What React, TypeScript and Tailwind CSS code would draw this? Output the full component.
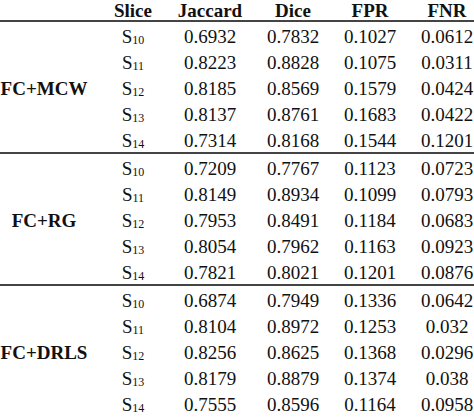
const groups = [
  {
    name: "FC+MCW",
    rows: [
      ["10", "0.6932", "0.7832", "0.1027", "0.0612"],
      ["11", "0.8223", "0.8828", "0.1075", "0.0311"],
      ["12", "0.8185", "0.8569", "0.1579", "0.0424"],
      ["13", "0.8137", "0.8761", "0.1683", "0.0422"],
      ["14", "0.7314", "0.8168", "0.1544", "0.1201"],
    ],
  },
  {
    name: "FC+RG",
    rows: [
      ["10", "0.7209", "0.7767", "0.1123", "0.0723"],
      ["11", "0.8149", "0.8934", "0.1099", "0.0793"],
      ["12", "0.7953", "0.8491", "0.1184", "0.0683"],
      ["13", "0.8054", "0.7962", "0.1163", "0.0923"],
      ["14", "0.7821", "0.8021", "0.1201", "0.0876"],
    ],
  },
  {
    name: "FC+DRLS",
    rows: [
      ["10", "0.6874", "0.7949", "0.1336", "0.0642"],
      ["11", "0.8104", "0.8972", "0.1253", "0.032"],
      ["12", "0.8256", "0.8625", "0.1368", "0.0296"],
      ["13", "0.8179", "0.8879", "0.1374", "0.038"],
      ["14", "0.7555", "0.8596", "0.1164", "0.0958"],
    ],
  },
];

const cols = "grid grid-cols-[88px_90px_64px_102px_52px_102px]";

function Cell({ children, bold }: { children: React.ReactNode; bold?: boolean }) {
  return (
    <div className={`flex justify-center items-center whitespace-nowrap ${bold ? "font-bold" : ""}`}>
      {children}
    </div>
  );
}

export default function App() {
  return (
    <div className="w-[474px] h-[418px] overflow-hidden bg-white text-[#111] text-[19px] leading-none font-['Liberation_Serif',serif]">
      <div className="w-[498px]">
        <div className={`${cols} h-[20px] font-bold`}>
          <Cell> </Cell>
          <Cell bold>Slice</Cell>
          <Cell bold>Jaccard</Cell>
          <Cell bold>Dice</Cell>
          <Cell bold>FPR</Cell>
          <Cell bold>FNR</Cell>
        </div>
        {groups.map((g) => (
          <div key={g.name}>
            <div className="h-[2px] bg-[#444]" />
            <div className={`${cols} grid-rows-[repeat(5,26px)]`}>
              <div className="row-span-5 flex items-center justify-center font-bold pt-[2px] whitespace-nowrap">
                {g.name}
              </div>
              {g.rows.map((r) => (
                <div key={r[0]} className="contents">
                  <div className="flex justify-center items-center pt-[3px]">
                    <span>S</span>
                    <span className="text-[12px] relative top-[3px]">{r[0]}</span>
                  </div>
                  {r.slice(1).map((v, i) => (
                    <div key={i} className="flex justify-center items-center pt-[3px]">
                      {v}
                    </div>
                  ))}
                </div>
              ))}
            </div>
          </div>
        ))}
      </div>
    </div>
  );
}
